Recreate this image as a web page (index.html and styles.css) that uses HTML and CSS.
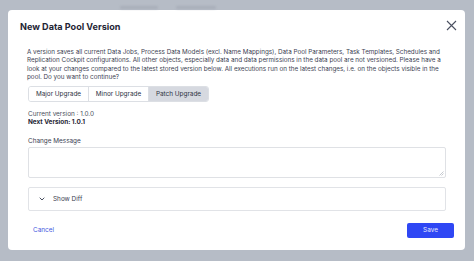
FILE: index.html
```html
<!DOCTYPE html>
<html>
<head>
<meta charset="utf-8">
<link rel="stylesheet" href="styles.css">
</head>
<body>
<div class="backdrop">
  <div class="bg-strip"><span class="ghost g1"></span><span class="ghost g2"></span></div>
  <div class="modal">
    <div class="header">
      <div class="title">New Data Pool Version</div>
      <svg class="close" width="11" height="11" viewBox="0 0 11 11"><path d="M1 1L10 10M10 1L1 10" stroke="#4a5060" stroke-width="1.1" fill="none"/></svg>
    </div>
    <div class="content">
      <p class="desc">A version saves all current Data Jobs, Process Data Models (excl. Name Mappings), Data Pool Parameters, Task Templates, Schedules and<br>Replication Cockpit configurations. All other objects, especially data and data permissions in the data pool are not versioned. Please have a<br>look at your changes compared to the latest stored version below. All executions run on the latest changes, i.e. on the objects visible in the<br>pool. Do you want to continue?</p>
      <div class="segmented">
        <button class="seg">Major Upgrade</button>
        <button class="seg">Minor Upgrade</button>
        <button class="seg active">Patch Upgrade</button>
      </div>
      <div class="versions">
        <div>Current version : 1.0.0</div>
        <div class="next">Next Version: 1.0.1</div>
      </div>
      <div class="label">Change Message</div>
      <div class="textarea"><svg class="grip" width="5" height="5" viewBox="0 0 5 5"><path d="M4.5 0.5L0.5 4.5M4.5 2.5L2.5 4.5" stroke="#b8bcc4" stroke-width="0.8"/></svg></div>
      <div class="diff">
        <svg class="chev" width="6" height="4" viewBox="0 0 6 4"><path d="M0.7 0.7L3 3L5.3 0.7" stroke="#4a5060" stroke-width="1" fill="none"/></svg>
        <span>Show Diff</span>
      </div>
    </div>
    <div class="footer">
      <span class="cancel">Cancel</span>
      <button class="save">Save</button>
    </div>
  </div>
</div>
</body>
</html>
```
FILE: styles.css
```css
* { box-sizing: border-box; }
html, body { margin: 0; padding: 0; }
body {
  width: 474px;
  height: 261px;
  overflow: hidden;
  background: #b6bcc6;
  font-family: Inter, "Noto Sans", sans-serif;
}
.backdrop {
  display: flex;
  flex-direction: column;
  padding-left: 8px;
}
.bg-strip {
  height: 10px;
  display: flex;
  align-items: flex-end;
  gap: 18px;
  padding-left: 112px;
}
.ghost {
  display: block;
  height: 3px;
  margin-bottom: 1px;
  border-radius: 2px;
  background: #a8aeb9;
  filter: blur(1px);
}
.g1 { width: 38px; }
.g2 { width: 40px; }
.modal {
  width: 457px;
  height: 240px;
  background: #fff;
  border-radius: 4px;
  display: flex;
  flex-direction: column;
}
.header {
  display: flex;
  justify-content: space-between;
  align-items: flex-start;
  padding: 10px 8px 0 12px;
}
.title {
  font-size: 9.1px;
  font-weight: 700;
  color: #1f2535;
  line-height: 14px;
}
.close { margin-top: 0; }
.content {
  padding: 0 19px 0 20px;
  display: flex;
  flex-direction: column;
}
.desc {
  margin: 13.5px 0 0 -1px;
  font-size: 6.3px;
  line-height: 8.6px;
  color: #3c4252;
  white-space: nowrap;
}
.segmented {
  margin-top: 4px;
  display: flex;
  width: 181px;
  height: 16px;
  border: 1px solid #dcdfe4;
  border-radius: 3px;
  overflow: hidden;
}
.seg {
  flex: 0 0 60px;
  margin: 0;
  padding: 0;
  border: 0;
  border-right: 1px solid #dcdfe4;
  background: #fff;
  font-family: inherit;
  font-size: 6.4px;
  color: #2d3242;
}
.seg.active {
  flex: 1;
  border-right: 0;
  background: #d6d9e0;
}
.versions {
  margin-top: 8px;
  font-size: 6.4px;
  line-height: 8px;
  color: #4a5060;
}
.next { font-weight: 700; color: #1f2535; }
.label {
  margin-top: 11px;
  font-size: 6.4px;
  line-height: 8px;
  color: #3c4252;
}
.textarea {
  margin-top: 2px;
  height: 31px;
  border: 1px solid #dfe1e5;
  border-radius: 2px;
  display: flex;
  justify-content: flex-end;
  align-items: flex-end;
  padding: 0 1px 1px 0;
}
.diff {
  margin-top: 9px;
  height: 24px;
  border: 1px solid #e1e3e7;
  border-radius: 2px;
  display: flex;
  align-items: center;
  padding-left: 10px;
  gap: 8px;
  font-size: 6.4px;
  color: #3c4252;
}
.footer {
  margin-top: 12px;
  padding: 0 11px 0 25px;
  display: flex;
  justify-content: space-between;
  align-items: center;
}
.cancel {
  font-size: 6.4px;
  color: #4356e0;
}
.save {
  width: 47px;
  height: 15px;
  margin: 0;
  padding: 0;
  border: 0;
  border-radius: 2px;
  background: #2f47f4;
  color: #e8ebff;
  font-family: inherit;
  font-size: 6.4px;
}
```
